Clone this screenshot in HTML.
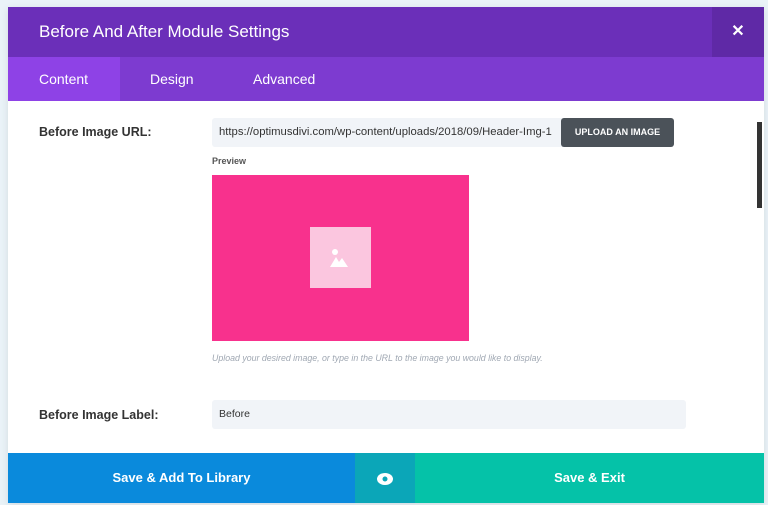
<!DOCTYPE html>
<html><head><style>
*{margin:0;padding:0;box-sizing:border-box}
body{width:768px;height:505px;background:#eaf3f8;font-family:"Liberation Sans",sans-serif;position:relative;overflow:hidden}
.m{position:absolute;left:8px;top:7px;width:756px;height:496px;background:#fff;overflow:hidden;box-shadow:0 2px 8px rgba(0,0,0,.1)}
.hd{position:absolute;left:0;top:0;width:756px;height:50px;background:#6b2fb9;color:#fff;font-size:17px;line-height:50px;padding-left:31px}
.x{position:absolute;right:0;top:0;width:52px;height:50px;background:#5f29a6;color:#fff;text-align:center;font-weight:bold;font-size:16px;line-height:50px}
.tb{position:absolute;left:0;top:50px;width:756px;height:44px;background:#7d3bd0;color:#fff;font-size:14px}
.tb span{position:absolute;top:0;line-height:44px}
.act{position:absolute;left:0;top:0;width:112px;height:44px;background:#8e42e6}
.lbl{position:absolute;font-size:12.5px;color:#333;font-weight:bold}
.in{position:absolute;background:#f1f4f8;border-radius:3px;font-size:11.3px;color:#333;padding-left:7px;white-space:nowrap;overflow:hidden}
.btn{position:absolute;left:553px;top:111px;width:113px;height:29px;background:#4b5259;color:#fff;font-size:9px;font-weight:bold;text-align:center;line-height:29px;border-radius:3px}
.pv{position:absolute;left:204px;top:168px;width:257px;height:166px;background:#f8318d}
.ph{position:absolute;left:98px;top:52px;width:61px;height:61px;background:#fbc6df}
.sb{position:absolute;left:749px;top:115px;width:5px;height:86px;background:#333}
.ft{position:absolute;top:446px;height:50px;color:#fff;font-weight:bold;font-size:13px;text-align:center;line-height:50px}
</style></head><body>
<div class="m">
<div class="hd">Before And After Module Settings<div class="x">✕</div></div>
<div class="tb"><div class="act"></div><span style="left:31px">Content</span><span style="left:142px">Design</span><span style="left:245px">Advanced</span></div>
<div class="lbl" style="left:31px;top:118px">Before Image URL:</div>
<div class="in" style="left:204px;top:111px;width:354px;height:29px;line-height:29px">https://optimusdivi.com/wp-content/uploads/2018/09/Header-Img-1</div>
<div class="btn">UPLOAD AN IMAGE</div>
<div style="position:absolute;left:204px;top:149px;font-size:9px;font-weight:bold;color:#555">Preview</div>
<div class="pv"><div class="ph"><svg width="61" height="61" viewBox="0 0 61 61"><circle cx="25" cy="25" r="3" fill="#fff"/><path d="M20 40 L26 30 L29 35 L32 31 L38 40Z" fill="#fff"/></svg></div></div>
<div style="position:absolute;left:204px;top:346px;font-size:8.8px;font-style:italic;color:#a0a8b3;white-space:nowrap">Upload your desired image, or type in the URL to the image you would like to display.</div>
<div class="lbl" style="left:31px;top:401px">Before Image Label:</div>
<div class="in" style="left:204px;top:393px;width:474px;height:29px;line-height:29px;font-size:10.5px">Before</div>
<div class="sb"></div>
<div class="ft" style="left:0;width:347px;background:#0a8adc">Save &amp; Add To Library</div>
<div class="ft" style="left:347px;width:60px;background:#0ba6b8"><svg width="16" height="16" viewBox="0 0 16 16" style="vertical-align:middle"><ellipse cx="8" cy="8" rx="8" ry="6" fill="#fff"/><circle cx="8" cy="8" r="2.5" fill="#0ba6b8"/></svg></div>
<div class="ft" style="left:407px;width:349px;background:#05c2a8">Save &amp; Exit</div>
</div>
</body></html>
